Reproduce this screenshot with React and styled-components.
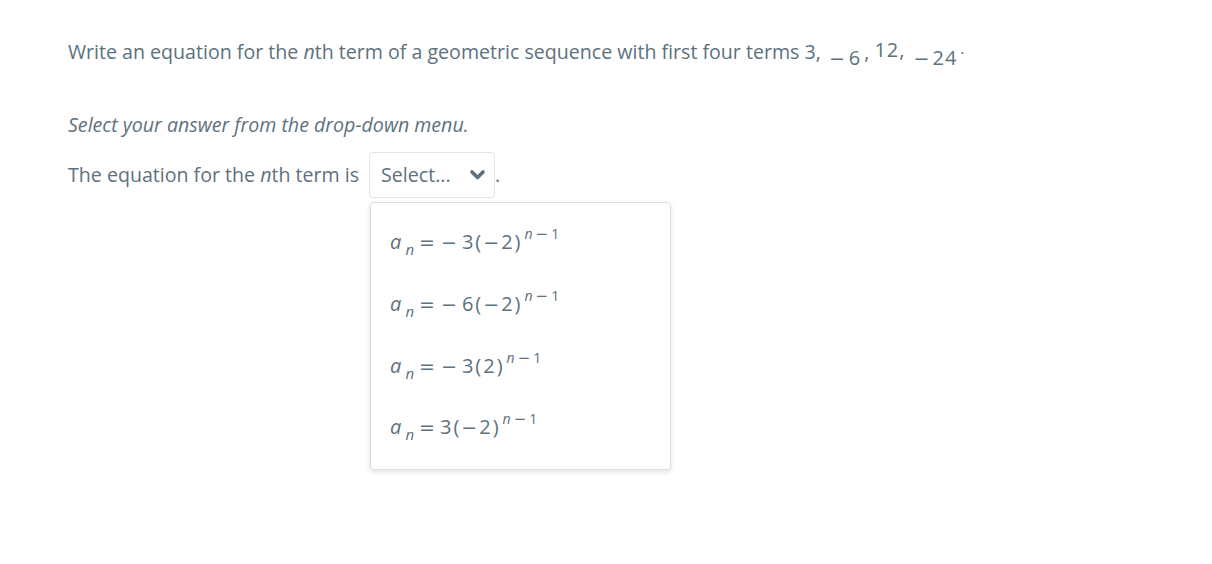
import React from "react";
import styled, { createGlobalStyle } from "styled-components";

const Global = createGlobalStyle`
  html, body { margin: 0; padding: 0; background: #fff; }
  body { font-family: "Open Sans", Lato, sans-serif; color: #5d717e; }
`;

const Page = styled.div`
  padding: 38px 0 0 68px;
  font-size: 19.6px;
  min-height: 564px;
  box-sizing: border-box;
`;

const Question = styled.p`
  margin: 0;
  line-height: 28px;
  white-space: nowrap;
`;

const Var = styled.i`
  font-style: italic;
`;

const Term = styled.span`
  position: relative;
  top: ${(p) => p.$shift || 0}px;
  font-size: ${(p) => p.$size || 20}px;
  margin: 0 ${(p) => p.$gap || 0}px;
  letter-spacing: 1px;
`;

const Op = styled.span`
  font-family: "DejaVu Sans", sans-serif;
  font-size: ${(p) => p.$size || 19}px;
  margin: 0 ${(p) => p.$r || 0}px 0 ${(p) => p.$l || 0}px;
  letter-spacing: 0;
`;

const Hint = styled.p`
  margin: 44px 0 0;
  font-style: italic;
  line-height: 28px;
`;

const AnswerRow = styled.div`
  margin-top: 13px;
  display: flex;
  align-items: flex-start;
  line-height: 46px;
`;

const Wrap = styled.div`
  margin-left: 10px;
  display: flex;
  flex-direction: column;
  gap: 4px;
`;

const SelectRow = styled.div`
  display: flex;
  align-items: flex-start;
`;

const SelectBox = styled.div`
  box-sizing: border-box;
  width: 126px;
  height: 46px;
  border: 1px solid #e2e4e6;
  border-radius: 4px;
  display: flex;
  align-items: center;
  justify-content: space-between;
  padding: 0 8px 0 11px;
  line-height: 1;
`;

const Menu = styled.div`
  margin-left: 1px;
  box-sizing: border-box;
  width: 301px;
  height: 268px;
  background: #fff;
  border: 1px solid #dcdfe1;
  border-radius: 4px;
  box-shadow: 0 2px 5px rgba(0, 0, 0, 0.12);
  padding: 19px 0 0 19px;
  display: flex;
  flex-direction: column;
`;

const Option = styled.div`
  height: 65px;
  display: flex;
  align-items: baseline;
  padding-top: 6px;
  box-sizing: border-box;
  font-size: 20px;
  line-height: 28px;
  white-space: nowrap;
`;

const Num = styled.span`
  letter-spacing: 2px;
`;

const MathA = styled.span`
  font-style: italic;
`;

const Sub = styled.span`
  font-style: italic;
  font-size: 15px;
  position: relative;
  top: 6px;
  margin: 0 5px 0 4px;
`;

const Sup = styled.span`
  font-size: 14px;
  position: relative;
  top: -10px;
  margin-left: 2px;
`;

const Chevron = () => (
  <svg width="17" height="12" viewBox="0 0 17 12">
    <path d="M3 3 L8.5 8.5 L14 3" fill="none" stroke="#5d717e" strokeWidth="3.6" strokeLinecap="round" strokeLinejoin="round" />
  </svg>
);

const Minus = ({ l = 0, r = 0, size }) => (
  <Op $l={l} $r={r} $size={size}>
    −
  </Op>
);

const options = [
  { lead: true, coef: "3", base: true },
  { lead: true, coef: "6", base: true },
  { lead: true, coef: "3", base: false },
  { lead: false, coef: "3", base: true },
];

export default function App() {
  return (
    <Page>
      <Global />
      <Question>
        Write an equation for the <Var>n</Var>th term of a geometric sequence with first four terms 3,{" "}
        <Term $shift={6} $gap={3}>
          <Minus r={4} />6
        </Term>
        , <Term $shift={-2}>12,</Term>{" "}
        <Term $shift={6} $gap={3}>
          <Minus r={3} />
          24
        </Term>
        <Term $size={16}>·</Term>
      </Question>
      <Hint>Select your answer from the drop-down menu.</Hint>
      <AnswerRow>
        <span>
          The equation for the <Var>n</Var>th term is
        </span>
        <Wrap>
          <SelectRow>
            <SelectBox>
              <span>Select...</span>
              <Chevron />
            </SelectBox>
            <span>.</span>
          </SelectRow>
          <Menu>
            {options.map((o, i) => (
              <Option key={i}>
                <MathA>a</MathA>
                <Sub>n</Sub>
                <Op $r={o.lead ? 3 : 5}>=</Op>
                {o.lead && <Minus l={3} r={5} />}
                <Num>{o.coef}(</Num>
                {o.base && <Minus r={2} />}
                <Num>2)</Num>
                <Sup>
                  <i>n</i>
                  <Minus l={3} r={3} size={15} />1
                </Sup>
              </Option>
            ))}
          </Menu>
        </Wrap>
      </AnswerRow>
    </Page>
  );
}
